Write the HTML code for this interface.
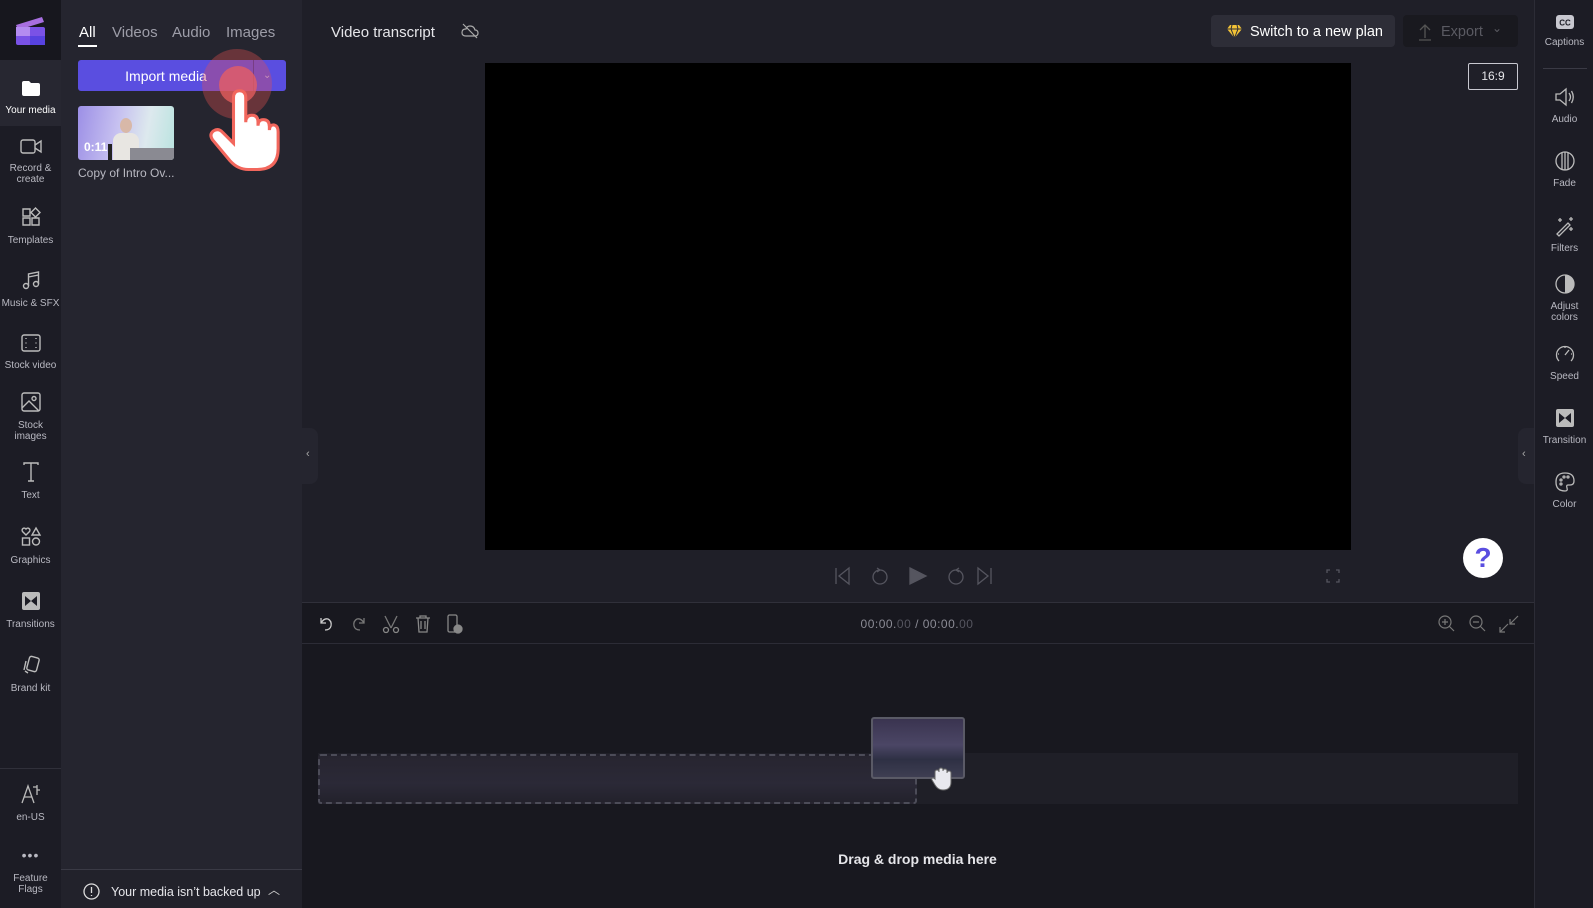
<!DOCTYPE html>
<html><head><meta charset="utf-8"><style>
*{margin:0;padding:0;box-sizing:border-box}
body{width:1593px;height:908px;overflow:hidden;background:#1f1f28;font-family:"Liberation Sans",sans-serif;color:#e6e6ea;position:relative}
.a{position:absolute}
.nav{left:0;top:0;width:61px;height:908px;background:#1c1c25}
.ni{position:absolute;left:0;width:61px;text-align:center;font-size:10px;color:#b9b9c2;line-height:11px}
.ni svg{display:block;margin:0 auto 8px}
.rp{left:1534px;top:0;width:59px;height:908px;background:#1c1c25;border-left:1px solid #2c2c36}
.ri{position:absolute;left:0;width:59px;text-align:center;font-size:10px;color:#b9b9c2;line-height:11px}
.ri svg{display:block;margin:0 auto 7px}
.panel{left:61px;top:0;width:241px;height:908px;background:#25252f}
svg{overflow:visible}
</style></head><body>
<div class="a nav">
 <div class="a" style="left:0;top:0;width:61px;height:60px;background:#17171e"></div>
 <svg class="a" style="left:14px;top:14px" width="32" height="32" viewBox="0 0 32 32">
  <path d="M2 11 L28 3 L30 8 L4 16Z" fill="#a86fe0"/>
  <rect x="2" y="13" width="29" height="18" rx="2" fill="#7a52e6"/>
  <rect x="2" y="13" width="14" height="9" fill="#b48cf0"/>
  <rect x="16" y="22" width="15" height="9" fill="#5742e0"/>
 </svg>
 <div class="a" style="left:0;top:60px;width:61px;height:66px;background:#272731"></div>
 <div class="ni" style="top:80px;color:#fff"><svg width="20" height="17" viewBox="0 0 20 17"><path d="M1 3 Q1 1 3 1 H8 L10 3 H17 Q19 3 19 5 V14 Q19 16 17 16 H3 Q1 16 1 14Z" fill="#fff"/></svg>Your media</div>
 <div class="ni" style="top:138px"><svg width="22" height="17" viewBox="0 0 22 17" fill="none" stroke="#bbb" stroke-width="1.4"><rect x="1" y="2" width="14" height="13" rx="2"/><path d="M15 7 L21 3 V14 L15 10"/></svg>Record &amp;<br>create</div>
 <div class="ni" style="top:207px"><svg width="20" height="20" viewBox="0 0 20 20" fill="none" stroke="#bbb" stroke-width="1.4"><path d="M2 2h7v7H2zM2 11h7v7H2zM11 11h7v7h-7zM14.5 1 L19 5.5 L14.5 10 L10 5.5Z"/></svg>Templates</div>
 <div class="ni" style="top:270px"><svg width="20" height="20" viewBox="0 0 20 20" fill="none" stroke="#bbb" stroke-width="1.4"><circle cx="5" cy="16" r="2.5"/><circle cx="15" cy="14" r="2.5"/><path d="M7.5 16V4L17.5 2V14M7.5 7L17.5 5"/></svg>Music &amp; SFX</div>
 <div class="ni" style="top:334px"><svg width="20" height="18" viewBox="0 0 20 18" fill="none" stroke="#bbb" stroke-width="1.4"><rect x="1" y="1" width="18" height="16" rx="2"/><path d="M5 4v1M5 8.5v1M5 13v1M15 4v1M15 8.5v1M15 13v1"/></svg>Stock video</div>
 <div class="ni" style="top:392px"><svg width="20" height="20" viewBox="0 0 20 20" fill="none" stroke="#bbb" stroke-width="1.4"><rect x="1" y="1" width="18" height="18" rx="2"/><circle cx="13" cy="6.5" r="2"/><path d="M1 16 L8 9 L18 19"/></svg>Stock<br>images</div>
 <div class="ni" style="top:462px"><svg width="20" height="20" viewBox="0 0 20 20" fill="none" stroke="#bbb" stroke-width="1.4"><path d="M3 3V1H17V3M10 1V19M7 19H13"/></svg>Text</div>
 <div class="ni" style="top:527px"><svg width="20" height="20" viewBox="0 0 20 20" fill="none" stroke="#bbb" stroke-width="1.4"><path d="M5 8 L1.5 4.5 A2 2 0 0 1 5 2 A2 2 0 0 1 8.5 4.5Z M15 1 L19 8 H11Z"/><rect x="1.5" y="11" width="7" height="7"/><circle cx="15" cy="14.5" r="3.5"/></svg>Graphics</div>
 <div class="ni" style="top:591px"><svg width="20" height="20" viewBox="0 0 20 20"><rect x="1" y="1" width="18" height="18" rx="2" fill="#bbb"/><path d="M4 5 L10 10 L4 15Z M16 5 L10 10 L16 15Z" fill="#1c1c25"/></svg>Transitions</div>
 <div class="ni" style="top:655px"><svg width="20" height="20" viewBox="0 0 20 20" fill="none" stroke="#bbb" stroke-width="1.4"><rect x="7" y="2" width="10" height="14" rx="2" transform="rotate(15 12 9)"/><path d="M5 6 L3 15 M7 18 L4 16"/></svg>Brand kit</div>
 <div class="a" style="left:0;top:768px;width:61px;height:1px;background:#30303a"></div>
 <div class="ni" style="top:782px"><svg width="22" height="22" viewBox="0 0 22 22" fill="none" stroke="#bbb" stroke-width="1.3"><path d="M2 21 L8 4 L14 21M4.5 15H11.5M13 5H17M17 3V13M17 8H20"/></svg>en-US</div>
 <div class="ni" style="top:851px"><div style="font-size:14px;letter-spacing:1px;line-height:8px;margin-bottom:14px">•••</div>Feature<br>Flags</div>
</div>

<div class="a panel">
 <div class="a" style="left:18px;top:24px;font-size:15px;color:#fff">All</div>
 <div class="a" style="left:17px;top:45px;width:19px;height:2px;background:#fff"></div>
 <div class="a" style="left:51px;top:24px;font-size:15px;color:#9d9da8">Videos</div>
 <div class="a" style="left:111px;top:24px;font-size:15px;color:#9d9da8">Audio</div>
 <div class="a" style="left:165px;top:24px;font-size:15px;color:#9d9da8">Images</div>
 <div class="a" style="left:17px;top:60px;width:208px;height:31px;background:#5a4ee0;border-radius:3px"></div>
 <div class="a" style="left:17px;top:68px;width:176px;text-align:center;font-size:14px;color:#fff">Import media</div>
 <div class="a" style="left:192px;top:60px;width:1px;height:31px;background:#3c33a0"></div>
 <div class="a" style="left:202px;top:70px;font-size:10px;color:#b8b3f0">⌄</div>
 <div class="a" style="left:17px;top:106px;width:96px;height:54px;border-radius:3px;background:linear-gradient(100deg,#9c8fe6 0%,#c6c0f0 40%,#dde9ee 70%,#b9e3df 100%);overflow:hidden">
  <div class="a" style="left:42px;top:12px;width:12px;height:15px;border-radius:50%;background:#d8b8a8"></div>
  <div class="a" style="left:35px;top:27px;width:26px;height:27px;border-radius:8px 8px 0 0;background:#e8e6e2"></div>
  <div class="a" style="left:52px;top:42px;width:44px;height:12px;background:#8a8a92"></div>
  <div class="a" style="left:30px;top:38px;width:4px;height:16px;background:#222"></div>
  <div class="a" style="left:6px;top:34px;font-size:12px;font-weight:bold;color:#fff">0:11</div>
 </div>
 <div class="a" style="left:17px;top:166px;font-size:12px;color:#b9b9c2">Copy of Intro Ov...</div>
 <div class="a" style="left:141px;top:49px;width:70px;height:70px;border-radius:50%;background:rgba(230,80,80,0.35)"></div>
 <div class="a" style="left:158px;top:66px;width:38px;height:38px;border-radius:50%;background:rgba(235,95,95,0.75)"></div>
 <svg class="a" style="left:148px;top:88px" width="70" height="86" viewBox="0 0 80 92"><path d="M28 8 Q28 0 35 0 Q42 0 42 8 V36 Q42 28 49 28 Q56 28 56 36 V40 Q56 33 62 33 Q69 33 69 41 V45 Q69 39 74 39 Q79 40 79 47 V66 Q79 90 55 90 H45 Q33 90 24 80 L4 56 Q0 50 5 46 Q11 42 16 48 L28 60Z" fill="#fff" stroke="#f2675d" stroke-width="3.5"/></svg>
 <div class="a" style="left:0;top:869px;width:241px;height:1px;background:#3a3a45"></div>
 <div class="a" style="left:0;top:870px;width:241px;height:38px;background:#22222b"></div>
 <svg class="a" style="left:22px;top:883px" width="17" height="17" viewBox="0 0 17 17" fill="none" stroke="#ddd" stroke-width="1.3"><circle cx="8.5" cy="8.5" r="7.5"/><path d="M8.5 4V10M8.5 12V13"/></svg>
 <div class="a" style="left:50px;top:885px;font-size:12.5px;color:#e6e6ea">Your media isn’t backed up</div>
 <div class="a" style="left:207px;top:881px;font-size:12px;color:#ccc">︿</div>
</div>
<div class="a" style="left:302px;top:428px;width:16px;height:56px;background:#25252f;border-radius:0 8px 8px 0"></div>
<div class="a" style="left:306px;top:448px;font-size:11px;color:#aaa">‹</div>

<div class="a" style="left:331px;top:24px;font-size:15px;color:#e6e6ea">Video transcript</div>
<svg class="a" style="left:461px;top:23px" width="18" height="16" viewBox="0 0 18 16" fill="none" stroke="#aaa" stroke-width="1.2"><path d="M5 13H14Q17 13 17 10Q17 7 14 7Q13 3 9 3Q6 3 5 6Q1 6 1 9.5Q1 13 5 13ZM2 1L16 15"/></svg>
<div class="a" style="left:1211px;top:15px;width:184px;height:32px;background:#2d2d37;border-radius:4px"></div>
<svg class="a" style="left:1226px;top:24px" width="17" height="15" viewBox="0 0 17 15"><path d="M1 5 L4 1 H13 L16 5 L8.5 14Z" fill="#f2c237"/><path d="M1 5H16M6 1L5 5L8.5 14L12 5L11 1" stroke="#2d2d37" stroke-width="1" fill="none"/></svg>
<div class="a" style="left:1250px;top:24px;font-size:14.5px;color:#fff">Switch to a new plan</div>
<div class="a" style="left:1403px;top:15px;width:115px;height:32px;background:#19191f;border-radius:4px"></div>
<svg class="a" style="left:1418px;top:23px" width="14" height="18" viewBox="0 0 14 18" fill="none" stroke="#555" stroke-width="1.3"><path d="M7 15V2M2 7L7 2L12 7M1 17H13"/></svg>
<div class="a" style="left:1441px;top:24px;font-size:14.5px;color:#5a5a62">Export</div>
<div class="a" style="left:1492px;top:21px;font-size:12px;color:#5a5a62">⌄</div>

<div class="a" style="left:485px;top:63px;width:866px;height:487px;background:#000"></div>
<div class="a" style="left:1468px;top:63px;width:50px;height:27px;border:1px solid #c8c8d0;border-radius:2px;font-size:12px;text-align:center;line-height:25px;color:#e6e6ea">16:9</div>
<div class="a" style="left:1463px;top:538px;width:40px;height:40px;border-radius:50%;background:#fff;text-align:center;font-size:28px;font-weight:bold;line-height:40px;color:#5a4ee0">?</div>
<svg class="a" style="left:835px;top:566px" width="170" height="20" viewBox="0 0 170 20" fill="none" stroke="#55555f" stroke-width="1.3">
 <path d="M1 2V18M14 2L4 10L14 18Z"/>
 <circle cx="45" cy="11" r="7"/><path d="M45 4L42 2M45 4L42 6"/>
 <path d="M75 2L91 10L75 18Z" fill="#55555f"/>
 <circle cx="121" cy="11" r="7"/><path d="M121 4L124 2M121 4L124 6"/>
 <path d="M156 2V18M143 2L153 10L143 18Z"/>
</svg>
<svg class="a" style="left:1326px;top:569px" width="14" height="14" viewBox="0 0 14 14" fill="none" stroke="#55555f" stroke-width="1.3"><path d="M1 4V1H4M10 1H13V4M13 10V13H10M4 13H1V10"/></svg>
<div class="a" style="left:302px;top:602px;width:1232px;height:1px;background:#30303a"></div>
<div class="a" style="left:302px;top:603px;width:1232px;height:305px;background:#18181f"></div>
<div class="a" style="left:302px;top:643px;width:1232px;height:1px;background:#2c2c36"></div>
<svg class="a" style="left:318px;top:614px" width="150" height="20" viewBox="0 0 150 20" fill="none" stroke="#888" stroke-width="1.3">
 <path d="M3 4V9H8M3 9Q6 4 10 5Q14 7 13 12Q12 16 7 16" stroke="#ccc"/>
 <path d="M46 4V9H41M46 9Q43 4 39 5Q35 7 36 12Q37 16 42 16" stroke="#777"/>
 <path d="M67 2L73 14M79 2L73 14" stroke="#777"/><circle cx="68" cy="16" r="2.5"/><circle cx="78" cy="16" r="2.5"/>
 <path d="M98 4H112M102 4V2H108V4M100 4L101 18H109L110 4M103 7V15M107 7V15"/>
 <rect x="130" y="1" width="9" height="17" rx="1.5"/><circle cx="140" cy="15" r="4" fill="#888"/>
</svg>
<div class="a" style="left:860px;top:617px;width:114px;text-align:center;font-size:12px;color:#8b8b95;letter-spacing:.5px">00:00.<span style="color:#55555f">00</span> / 00:00.<span style="color:#55555f">00</span></div>
<svg class="a" style="left:1438px;top:615px" width="84" height="18" viewBox="0 0 84 18" fill="none" stroke="#777" stroke-width="1.2">
 <circle cx="7" cy="7" r="6"/><path d="M4 7H10M7 4V10M11 11L16 16"/>
 <circle cx="38" cy="7" r="6"/><path d="M35 7H41M42 11L47 16"/>
 <path d="M72 9L80 1M72 4V9H77M70 9L62 17M62 12V17H67"/>
</svg>
<div class="a" style="left:318px;top:753px;width:1200px;height:51px;background:#1f1f27"></div>
<div class="a" style="left:318px;top:754px;width:599px;height:50px;border:2px dashed #4c4c58;border-radius:3px;background:linear-gradient(180deg,#272530 0%,#2b2937 60%,#23222c 100%)"></div>
<div class="a" style="left:871px;top:717px;width:94px;height:62px;border:2px solid #5a5a66;border-radius:3px;background:linear-gradient(180deg,#3a3450 0%,#4b4665 45%,#2e3044 70%,#3e3e52 100%)"></div>
<svg class="a" style="left:930px;top:767px" width="26" height="24" viewBox="0 0 26 24"><path d="M5 12V5Q5 3 7 3Q9 3 9 5V3Q9 1 11 1Q13 1 13 3V4Q13 2 15 2Q17 2 17 4V6Q17 4 19 4Q21 4 21 6V15Q21 23 13 23Q8 23 5 18L2 13Q1 11 3 11Q4 11 5 12Z" fill="#e8e8ee" stroke="#666" stroke-width="1"/></svg>
<div class="a" style="left:780px;top:851px;width:275px;text-align:center;font-size:14px;font-weight:bold;color:#e6e6ea">Drag &amp; drop media here</div>

<div class="a" style="left:1518px;top:428px;width:16px;height:56px;background:#25252f;border-radius:8px 0 0 8px"></div>
<div class="a" style="left:1522px;top:448px;font-size:11px;color:#aaa">‹</div>

<div class="a rp">
 <div class="ri" style="top:14px"><svg width="20" height="16" viewBox="0 0 20 16"><rect x="1" y="1" width="18" height="14" rx="3" fill="#c8c8d0"/><text x="10" y="11.5" font-size="8" font-weight="bold" text-anchor="middle" fill="#1c1c25" font-family="Liberation Sans">CC</text></svg>Captions</div>
 <div class="a" style="left:8px;top:68px;width:44px;height:1px;background:#3a3a45"></div>
 <div class="ri" style="top:87px"><svg width="22" height="20" viewBox="0 0 22 20" fill="none" stroke="#bbb" stroke-width="1.3"><path d="M2 7H6L12 2V18L6 13H2Z M15 6Q18 10 15 14M17.5 4Q21 10 17.5 16"/></svg>Audio</div>
 <div class="ri" style="top:151px"><svg width="20" height="20" viewBox="0 0 20 20" fill="none" stroke="#bbb" stroke-width="1.3"><circle cx="10" cy="10" r="9"/><path d="M7 1.5V18.5M10 1V19M13 1.5V18.5"/></svg>Fade</div>
 <div class="ri" style="top:216px"><svg width="20" height="20" viewBox="0 0 20 20" fill="none" stroke="#bbb" stroke-width="1.3"><path d="M2 18L13 7L15 9L4 20Z M5 2V6M3 4H7M16 1V5M14 3H18M16 11V15M14 13H18"/></svg>Filters</div>
 <div class="ri" style="top:274px"><svg width="20" height="20" viewBox="0 0 20 20"><circle cx="10" cy="10" r="9" fill="none" stroke="#bbb" stroke-width="1.3"/><path d="M10 1A9 9 0 0 1 10 19Z" fill="#bbb"/></svg>Adjust<br>colors</div>
 <div class="ri" style="top:344px"><svg width="20" height="20" viewBox="0 0 20 20" fill="none" stroke="#bbb" stroke-width="1.3"><path d="M4 17A8.5 8.5 0 1 1 16 17M10 11L14 6M3 10H4M16 10H17M10 3V4"/></svg>Speed</div>
 <div class="ri" style="top:408px"><svg width="20" height="20" viewBox="0 0 20 20"><rect x="1" y="1" width="18" height="18" rx="2" fill="#bbb"/><path d="M4 5L10 10L4 15Z M16 5L10 10L16 15Z" fill="#1c1c25"/></svg>Transition</div>
 <div class="ri" style="top:472px"><svg width="20" height="20" viewBox="0 0 20 20" fill="none" stroke="#bbb" stroke-width="1.3"><path d="M10 1Q19 1 19 9Q19 13 15 13H13Q11 13 12 16Q13 19 10 19Q1 19 1 10Q1 1 10 1Z"/><circle cx="6" cy="8" r="1"/><circle cx="9" cy="5" r="1"/><circle cx="13" cy="5" r="1"/><circle cx="6" cy="12" r="1"/></svg>Color</div>
</div>
</body></html>
